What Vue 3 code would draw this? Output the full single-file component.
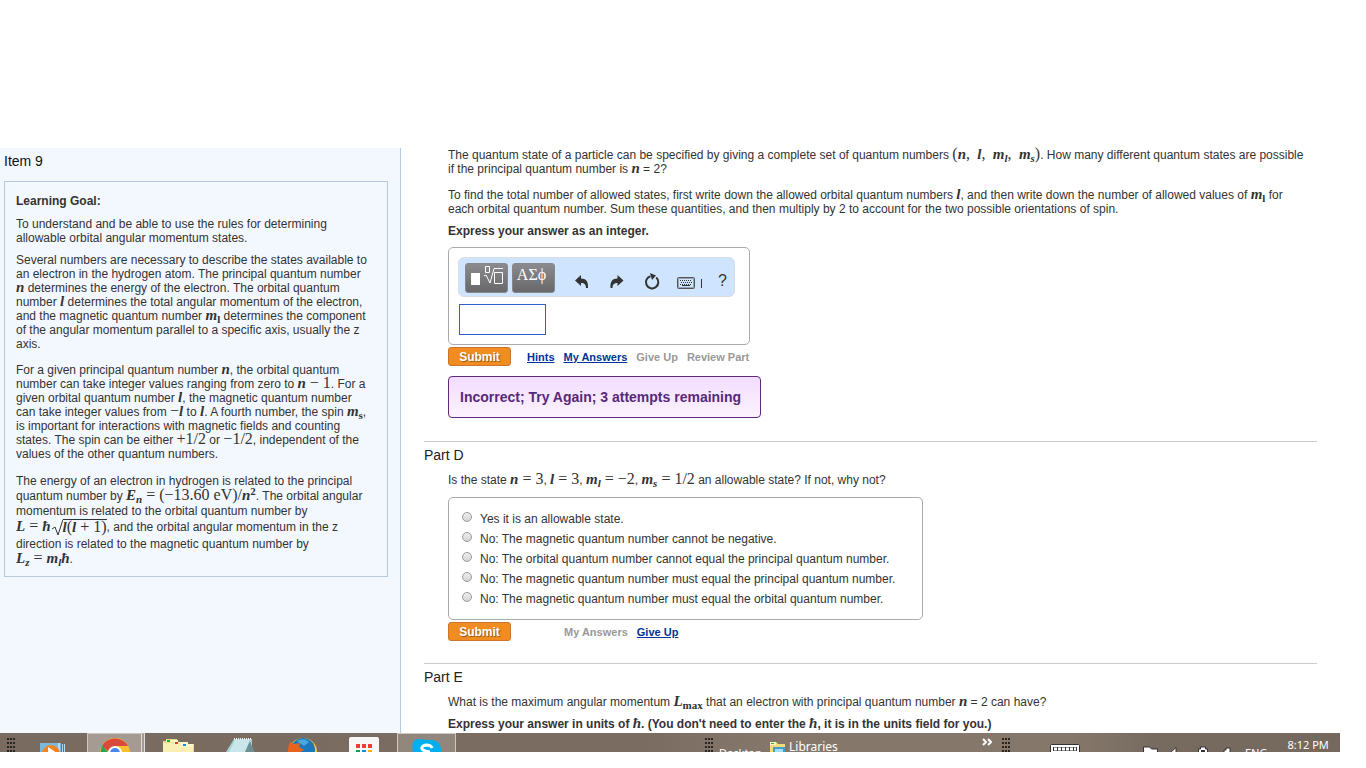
<script setup>
import { ref } from 'vue';

const answer = ref('');
const choice = ref(null);

const options = [
    'Yes it is an allowable state.',
    'No: The magnetic quantum number cannot be negative.',
    'No: The orbital quantum number cannot equal the principal quantum number.',
    'No: The magnetic quantum number must equal the principal quantum number.',
    'No: The magnetic quantum number must equal the orbital quantum number.',
];
</script>

<template>
    <div class="page">
        <div class="columns">
            <aside class="sidebar">
                <h1>Item 9</h1>
                <section class="goal">
                    <h2>Learning Goal:</h2>
                    <p>
                        To understand and be able to use the rules for determining<br>
                        allowable orbital angular momentum states.
                    </p>
                    <p>
                        Several numbers are necessary to describe the states available to<br>
                        an electron in the hydrogen atom. The principal quantum number<br>
                        <i>n</i> determines the energy of the electron. The orbital quantum<br>
                        number <i>l</i> determines the total angular momentum of the electron,<br>
                        and the magnetic quantum number <i>m</i><sub>l</sub> determines the component<br>
                        of the angular momentum parallel to a specific axis, usually the z<br>
                        axis.
                    </p>
                    <p class="far">
                        For a given principal quantum number <i>n</i>, the orbital quantum<br>
                        number can take integer values ranging from zero to <i>n</i><span class="math"> − 1</span>. For a<br>
                        given orbital quantum number <i>l</i>, the magnetic quantum number<br>
                        can take integer values from <span class="math">−</span><i>l</i> to <i>l</i>. A fourth number, the spin <i>m</i><sub>s</sub>,<br>
                        is important for interactions with magnetic fields and counting<br>
                        states. The spin can be either <span class="math">+1/2</span> or <span class="math">−1/2</span>, independent of the<br>
                        values of the other quantum numbers.
                    </p>
                    <p class="far tall">
                        The energy of an electron in hydrogen is related to the principal<br>
                        quantum number by <i>E</i><sub><i>n</i></sub><span class="math"> = (−13.60 eV)/</span><i>n</i><sup>2</sup>. The orbital angular<br>
                        momentum is related to the orbital quantum number by<br>
                        <i>L</i><span class="math"> = </span><i>ħ</i><span class="root"><svg width="12" height="18" viewBox="0 0 12 18"><path d="M1 10l3-2 3 8L12 0.500" fill="none" stroke="#333" /></svg><span class="radicand"><i>l</i><span class="math">(</span><i>l</i><span class="math"> + 1)</span></span></span>, and the orbital angular momentum in the z<br>
                        direction is related to the magnetic quantum number by<br>
                        <i>L</i><sub><i>z</i></sub><span class="math"> = </span><i>m</i><sub><i>l</i></sub><i>ħ</i>.
                    </p>
                </section>
            </aside>

            <main class="content">
                <section class="body">
                    <p>
                        The quantum state of a particle can be specified by giving a complete set of quantum numbers
                        <span class="math">(</span><i>n</i><span class="math">, </span> <i>l</i><span class="math">, </span> <i>m</i><sub><i>l</i></sub><span class="math">, </span> <i>m</i><sub><i>s</i></sub><span class="math">)</span>. How many different quantum states are possible<br>
                        if the principal quantum number is <i>n</i> = 2?
                    </p>
                    <p class="far">
                        To find the total number of allowed states, first write down the allowed orbital quantum numbers <i>l</i>, and then write down the number of allowed values of <i>m</i><sub>l</sub> for<br>
                        each orbital quantum number. Sum these quantities, and then multiply by 2 to account for the two possible orientations of spin.
                    </p>
                    <p><label class="strong" for="answer">Express your answer as an integer.</label></p>

                    <div class="editor">
                        <div class="toolbar">
                            <button class="palette" type="button" aria-label="Templates">
                                <svg width="36" height="24" viewBox="0 0 36 24" fill="none" stroke="#fff">
                                    <path d="M2 7h9v12H2z" fill="#fff" stroke="none" />
                                    <path d="M16.500 0.500h4v6h-4zM15 10l2-1 4 8 4-14.500h9M25.500 6.500h8v11h-8z" />
                                </svg>
                            </button>
                            <button class="palette greek" type="button">ΑΣϕ</button>
                            <button class="tool undo" type="button" aria-label="Undo">
                                <svg width="14" height="14" viewBox="0 0 14 14"><path d="M0 5.500L6 0v3.500c5 0 7.500 3 7 9.500h-2c0-3.500-1.500-5-5-5V11z" fill="#333" /></svg>
                            </button>
                            <button class="tool redo" type="button" aria-label="Redo">
                                <svg width="14" height="14" viewBox="0 0 14 14"><path d="M13.500 5.500L7.500 0v3.500c-5 0-7.500 3-7 9.500h2c0-3.500 1.500-5 5-5V11z" fill="#333" /></svg>
                            </button>
                            <button class="tool reset" type="button" aria-label="Reset">
                                <svg width="16" height="17" viewBox="0 0 16 17"><path d="M12.200 4.500A6.200 6.200 0 1 1 6.500 3.200" fill="none" stroke="#333" stroke-width="2" /><path d="M6 0l6 2.500-4 4.500z" fill="#333" /></svg>
                            </button>
                            <button class="tool keys" type="button" aria-label="Keyboard">
                                <svg width="18" height="12" viewBox="0 0 18 12" fill="none" stroke="#333">
                                    <rect x="0.500" y="0.500" width="17" height="11" rx="1" stroke="#555" />
                                    <rect x="1.500" y="1.500" width="15" height="9" stroke="#93a3b5" />
                                    <path d="M3 3.500h12M4 5.500h11M3 7.500h12" stroke-dasharray="1 1" />
                                    <path d="M5 8.500h8" />
                                </svg>
                            </button>
                            <span class="bar"></span>
                            <button class="tool help" type="button">?</button>
                        </div>
                        <input id="answer" v-model="answer" class="answer" type="text">
                    </div>

                    <div class="actions">
                        <button class="submit" type="button">Submit</button>
                        <a class="hints" href="#">Hints</a>
                        <a href="#">My Answers</a>
                        <span class="off">Give Up</span>
                        <span class="off">Review Part</span>
                    </div>
                    <div class="feedback">Incorrect; Try Again; 3 attempts remaining</div>
                </section>

                <section class="part">
                    <h3>Part D</h3>
                    <div class="body">
                        <p class="ask">
                            Is the state <i>n</i><span class="math"> = 3</span>, <i>l</i><span class="math"> = 3</span>, <i>m</i><sub><i>l</i></sub><span class="math"> = −2</span>, <i>m</i><sub><i>s</i></sub><span class="math"> = 1/2</span> an allowable state? If not, why not?
                        </p>
                        <div class="choices">
                            <label v-for="(option, index) in options" :key="index">
                                <input v-model="choice" type="radio" name="part-d" :value="index">
                                <span>{{ option }}</span>
                            </label>
                        </div>
                        <div class="actions">
                            <button class="submit" type="button">Submit</button>
                            <span class="off alone">My Answers</span>
                            <a href="#">Give Up</a>
                        </div>
                    </div>
                </section>

                <section class="part">
                    <h3>Part E</h3>
                    <div class="body">
                        <p class="ask">
                            What is the maximum angular momentum <i>L</i><sub>max</sub> that an electron with principal quantum number <i>n</i> = 2 can have?
                        </p>
                        <p class="strong">Express your answer in units of <i>ħ</i>. (You don't need to enter the <i>ħ</i>, it is in the units field for you.)</p>
                    </div>
                </section>
            </main>
        </div>

        <footer class="taskbar">
            <div class="apps">
                <span class="grip"></span>
                <svg class="app player" width="28" height="19" viewBox="0 0 28 19">
                    <path d="M2 10h21v9H2z" fill="#7db9dc" /><path d="M20 10h2v9h-2zM24 11h1v8h-1zM26 11h1v8h-1z" fill="#b4ddf2" />
                    <circle cx="13" cy="21" r="9" fill="#f58220" /><path d="M10 14l9 6h-9z" fill="#fff" />
                </svg>
                <button class="window chrome" type="button" aria-label="Chrome">
                    <svg width="30" height="17" viewBox="0 0 30 17">
                        <circle cx="15" cy="18" r="15" fill="#fbc02d" />
                        <path d="M2 11C7 1 23 1 28 11H15l-6 6z" fill="#d94a3d" /><path d="M2 10l8 10H0z" fill="#26a35a" />
                        <circle cx="15" cy="18" r="7" fill="#fff" /><circle cx="15" cy="18" r="5" fill="#4688f1" />
                    </svg>
                </button>
                <svg class="app folders" width="32" height="19" viewBox="0 0 32 19">
                    <path d="M1 19V8h3V6h11v3h11v2h6v8z" fill="#eadb8b" /><path d="M1 10h17l3 4h10v5H1z" fill="#f9efb4" />
                    <path d="M4 7h12v2H4zM12 9h14v2H12zM19 11h12v3H19z" fill="#fff6c7" />
                    <path d="M5 7h3v2H5z" fill="#1bb21b" /><path d="M13 9h3v2h-3z" fill="#d8432e" /><path d="M21 11h3v2h-3z" fill="#1988e0" />
                </svg>
                <svg class="app notes" width="28" height="19" viewBox="0 0 28 19">
                    <path d="M8 6h18v8l2 5H0z" fill="#a5d0d8" /><path d="M9 7h15l-5 12H3z" fill="#c9e7eb" /><path d="M24 8l-5 11h9z" fill="#6b8f94" />
                    <path d="M8 6h18" stroke="#f2f2f2" stroke-width="2" stroke-dasharray="1 1" />
                </svg>
                <svg class="app firefox" width="30" height="19" viewBox="0 0 30 19">
                    <circle cx="15" cy="19" r="14" fill="#f6c944" /><circle cx="15" cy="17" r="12" fill="#1c78bc" /><path d="M9 8q7-4 12 1l-5 4z" fill="#4aa8dd" />
                    <path d="M2 9l4 2 6-1-1 4 5 3-4 2H0q0-6 2-10z" fill="#e8641c" />
                </svg>
                <svg class="app grid" width="30" height="19" viewBox="0 0 30 19">
                    <rect y="4" width="30" height="20" rx="2" fill="#f7f7f7" />
                    <path d="M7 11h4v4H7zM13 11h4v4h-4zM19 11h4v4h-4z" fill="#ef3c34" />
                    <path d="M7 17h4v2H7z" fill="#169b57" /><path d="M13 17h4v2h-4z" fill="#1688e8" /><path d="M19 17h4v2h-4z" fill="#f7ae16" />
                </svg>
                <button class="window skype" type="button" aria-label="Skype">
                    <svg width="30" height="17" viewBox="0 0 30 17">
                        <path d="M1 17q-3-13 6-13 4 0 6 1 17-2 16 12z" fill="#00aff0" />
                        <path d="M20 13q-1-3-6-3-5 1-4 4 1 2 8 3" fill="none" stroke="#fff" stroke-width="3" />
                    </svg>
                </button>
            </div>
            <div class="links">
                <span class="grip"></span>
                <span class="desktop">Desktop</span>
                <svg width="17" height="19" viewBox="0 0 17 19">
                    <path d="M1 9h6l2 2h7v8H1z" fill="#f2dc79" /><path d="M1 9h6v3H1z" fill="#fbf3bd" /><path d="M2 10h3v1H2z" fill="#2eb82e" />
                    <path d="M4 14h12v5H4z" fill="#3fa0d0" /><path d="M6 16h8v3H6z" fill="#a5def4" />
                </svg>
                <span class="libraries">Libraries</span>
                <svg class="more" width="10" height="8" viewBox="0 0 10 8"><path d="M1 1l3 3-3 3M6 1l3 3-3 3" fill="none" stroke="#fff" stroke-width="2" /></svg>
                <span class="grip"></span>
            </div>
            <div class="tray">
                <svg class="touch" width="30" height="19" viewBox="0 0 30 19">
                    <rect x="0.500" y="11.500" width="29" height="10" rx="1" fill="#fff" stroke="#333" />
                    <path d="M3 14h24v4H3z" fill="#333" /><path d="M4 16h22" stroke="#fff" stroke-width="3" stroke-dasharray="3 1" />
                </svg>
                <svg class="status" width="90" height="19" viewBox="0 0 90 19" fill="#fff" stroke="#333">
                    <path d="M1.500 20v-6h6l2 2h6v4M28 20l6-5.500V20M56.500 20v-4h2v-2h5v2h2v4" />
                    <path d="M59 17h4v3h-4z" fill="#333" stroke="none" />
                    <path d="M82 19v-2h2v-2h4v4" />
                </svg>
                <span class="lang">ENG</span>
                <time>8:12 PM</time>
            </div>
        </footer>
    </div>
</template>

<style>
body {
    background: #fff;
}
</style>

<style scoped>
.page {
    padding-top: 148px;
    font: 12px/14px "Liberation Sans", Arial, sans-serif;
    color: #333;
}

.columns {
    display: flex;
}

.sidebar {
    flex: 0 0 401px;
    box-sizing: border-box;
    padding: 5px 12px 0 4px;
    background: #f3f8ff;
    border-right: 1px solid #b7c9dc;
}

h1,
h2,
h3,
p {
    margin: 0;
}

h1 {
    font-size: 14px;
    line-height: 16px;
    font-weight: normal;
    color: #111;
}

.goal {
    margin-top: 12px;
    padding: 12px 0 9px 11px;
    border: 1px solid #b7c9dc;
    white-space: nowrap;
}

h2 {
    font-size: 12px;
    line-height: 14px;
}

p + p {
    margin-top: 8px;
}

h2 + p {
    margin-top: 9px;
}

p.far {
    margin-top: 12px;
}

p.tall {
    margin-top: 13px;
    line-height: 15px;
}

i,
.math,
sub,
sup {
    font-family: "Liberation Serif", "Times New Roman", serif;
    line-height: 1px;
}

i {
    font-size: 15px;
    font-weight: bold;
    font-style: italic;
}

.math {
    font-size: 16px;
    white-space: pre;
}

sub,
sup {
    font-size: 11px;
    font-weight: bold;
}

sub i {
    font-size: 11px;
}

.root {
    display: inline-flex;
    vertical-align: middle;
}

.radicand {
    border-top: 1px solid #333;
    line-height: 16px;
}

.content {
    flex: 1;
    min-width: 0;
    padding: 0 49px 2px 23px;
}

.body {
    padding-left: 24px;
}

.content p {
    margin-right: -24px;
}

.strong {
    font-weight: bold;
}

.editor {
    box-sizing: border-box;
    width: 302px;
    margin-top: 9px;
    padding: 9px;
    border: 1px solid #aaa;
    border-radius: 5px;
}

.toolbar {
    display: flex;
    align-items: flex-start;
    box-sizing: border-box;
    width: 277px;
    height: 40px;
    padding: 5px 6px;
    background: #cfe5ff;
    border: 1px solid #d8dde4;
    border-radius: 6px;
}

button {
    padding: 0;
    border: 0;
    background: none;
    font-family: inherit;
}

.palette {
    width: 43px;
    height: 30px;
    margin-right: 4px;
    background: linear-gradient(#8b8b8f, #68686b);
    border: 1px solid #88888c;
    border-radius: 3px;
    color: #fff;
}

.palette svg {
    display: block;
    margin: 0 auto;
}

.greek {
    padding: 0 4px 6px 0;
    font-family: "Liberation Serif", serif;
    font-size: 16px;
}

.tool {
    color: #333;
}

.tool svg {
    display: block;
}

.undo {
    margin: 12px 0 0 16px;
}

.redo {
    margin: 12px 0 0 21px;
}

.reset {
    margin: 10px 0 0 20px;
}

.keys {
    margin: 14px 0 0 17px;
}

.bar {
    width: 1px;
    height: 9px;
    margin: 16px 0 0 6px;
    background: #333;
}

.help {
    margin: 9px 0 0 16px;
    font-size: 16px;
    line-height: 18px;
}

.answer {
    display: block;
    box-sizing: border-box;
    width: 87px;
    height: 31px;
    margin: 7px 0 0 1px;
    border: 1px solid #2e62c9;
}

.actions {
    display: flex;
    align-items: center;
    gap: 9px;
    margin-top: 2px;
    font-size: 11px;
    font-weight: bold;
}

.submit {
    width: 63px;
    height: 19px;
    background: #f18d20;
    border: 1px solid #cb742d;
    border-radius: 3px;
    color: #fff;
    font-size: 12px;
    font-weight: bold;
    text-shadow: 1px 1px 1px #8b5a1d;
}

.actions a {
    color: #039;
}

.actions .hints {
    margin-left: 7px;
}

.off {
    color: #999;
}

.alone {
    margin-left: 44px;
}

.feedback {
    box-sizing: border-box;
    width: 313px;
    margin-top: 10px;
    padding: 12px 11px;
    background: linear-gradient(#f2dcff, #fdf3ff);
    border: 1px solid #62277e;
    border-radius: 4px;
    color: #56297a;
    font-size: 14px;
    line-height: 16px;
    font-weight: bold;
}

.part {
    margin-top: 23px;
    padding-top: 5px;
    border-top: 1px solid #ccc;
}

.part + .part {
    margin-top: 22px;
}

h3 {
    font-size: 14px;
    line-height: 16px;
    font-weight: normal;
    color: #222;
}

.ask {
    padding-top: 10px;
}

.choices {
    display: flex;
    flex-direction: column;
    box-sizing: border-box;
    width: 475px;
    margin-top: 10px;
    padding: 11px 13px 10px;
    border: 1px solid #aaa;
    border-radius: 5px;
}

.choices label {
    display: flex;
    gap: 8px;
    line-height: 20px;
}

.choices input {
    appearance: none;
    box-sizing: border-box;
    width: 10px;
    height: 10px;
    margin: 3px 0 0;
    border: 1px solid #999;
    border-radius: 50%;
    background: linear-gradient(#eee, #d4d4d4);
}

.taskbar {
    display: flex;
    align-items: flex-start;
    height: 19px;
    margin-right: 26px;
    overflow: hidden;
    background: linear-gradient(90deg, #796b60 0, #7a6c61 48%, #85786b 58%, #85786b 80%, #776a5f 86%, #75685d);
    color: #fff;
    font-family: "Noto Sans", sans-serif;
    font-size: 11px;
}

.taskbar svg {
    display: block;
}

.apps,
.links,
.tray {
    display: flex;
}

.apps {
    flex: 1;
}

.grip {
    width: 9px;
    height: 14px;
    margin: 5px 0 0 7px;
    background: radial-gradient(circle at 1px 1px, #282420 1px, transparent 1px) 0 0 / 3px 4px;
}

.app.player {
    margin-left: 22px;
}

.window {
    height: 19px;
    border: 1px solid #cfc8c0;
    border-bottom: 0;
    background: #a59b92;
}

.window svg {
    margin: 1px auto 0;
}

.chrome {
    width: 58px;
    margin-left: 21px;
    border-right: 4px double #ddd;
}

.app.folders {
    margin-left: 17px;
}

.app.notes {
    margin-left: 32px;
}

.app.firefox {
    margin-left: 34px;
}

.app.grid {
    margin-left: 31px;
}

.skype {
    width: 59px;
    margin-left: 18px;
    background: #92877d;
}

.links {
    width: 317px;
}

.links .grip:first-child {
    margin-left: 11px;
}

.desktop {
    width: 44px;
    margin: 13px 6px 0 5px;
}

.libraries {
    flex: 1;
    margin: 8px 0 0 3px;
    line-height: 11px;
    font-size: 12px;
}

.more {
    margin: 5px 3px 0 0;
}

.tray {
    width: 329px;
}

.touch {
    margin-left: 39px;
}

.status {
    margin-left: 62px;
}

.lang {
    margin: 13px 0 0 13px;
}

time {
    margin: 5px 0 0 20px;
    white-space: nowrap;
}
</style>
